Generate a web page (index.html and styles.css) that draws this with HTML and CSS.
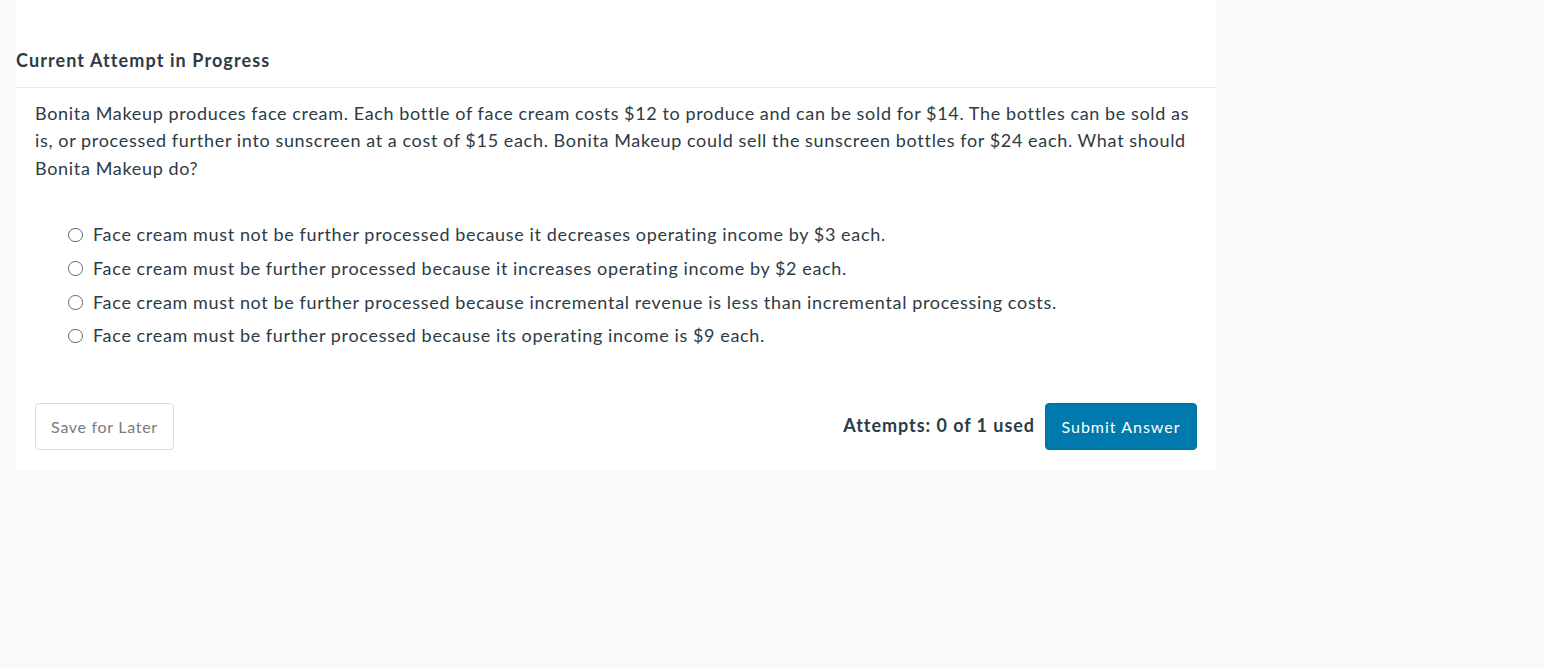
FILE: index.html
```html
<!DOCTYPE html>
<html lang="en">
<head>
<meta charset="utf-8">
<title>Current Attempt in Progress</title>
<link rel="stylesheet" href="styles.css">
</head>
<body>
<main class="panel">
  <header class="panel-head">
    <h2 class="panel-title">Current Attempt in Progress</h2>
  </header>
  <section class="question">
    <p class="question-text">Bonita Makeup produces face cream. Each bottle of face cream costs $12 to produce and can be sold for $14. The bottles can be sold as is, or processed further into sunscreen at a cost of $15 each. Bonita Makeup could sell the sunscreen bottles for $24 each. What should Bonita Makeup do?</p>
    <ul class="options">
      <li class="option"><span class="radio"></span><span class="option-text">Face cream must not be further processed because it decreases operating income by $3 each.</span></li>
      <li class="option"><span class="radio"></span><span class="option-text">Face cream must be further processed because it increases operating income by $2 each.</span></li>
      <li class="option"><span class="radio"></span><span class="option-text">Face cream must not be further processed because incremental revenue is less than incremental processing costs.</span></li>
      <li class="option"><span class="radio"></span><span class="option-text">Face cream must be further processed because its operating income is $9 each.</span></li>
    </ul>
  </section>
  <footer class="actions">
    <button class="btn btn-save" type="button">Save for Later</button>
    <div class="actions-right">
      <span class="attempts">Attempts: 0 of 1 used</span>
      <button class="btn btn-submit" type="button">Submit Answer</button>
    </div>
  </footer>
</main>
</body>
</html>
```

FILE: styles.css
```css
html, body {
  margin: 0;
  padding: 0;
}
body {
  background: #f9f9f9;
  font-family: Lato, "Liberation Sans", sans-serif;
  color: #2d3b45;
  padding-left: 16px;
}
.panel {
  width: 1200px;
  background: #ffffff;
  box-sizing: border-box;
}
.panel-head {
  padding: 48px 0 15px 0;
  border-bottom: 1px solid #ececec;
}
.panel-title {
  margin: 0;
  font-size: 18px;
  line-height: 24px;
  font-weight: 700;
  letter-spacing: 1.1px;
  color: #2d3b45;
}
.question {
  padding: 12px 19px 0 19px;
}
.question-text {
  margin: 0;
  font-size: 18px;
  line-height: 27.3px;
  letter-spacing: 0.7px;
  word-spacing: -0.35px;
}
.options {
  list-style: none;
  margin: 39.5px 0 0 0;
  padding: 0 0 0 33px;
}
.option {
  display: flex;
  align-items: center;
  font-size: 18px;
  line-height: 27px;
  margin-bottom: 6.7px;
  letter-spacing: 0.7px;
  word-spacing: -0.35px;
}
.option:last-child {
  margin-bottom: 0;
}
.radio {
  width: 14.5px;
  height: 14.5px;
  box-sizing: border-box;
  border: 1.6px solid #5f6a72;
  border-radius: 50%;
  margin-right: 10.5px;
  flex: none;
}
.actions {
  display: flex;
  justify-content: space-between;
  align-items: center;
  padding: 54px 19px 20px 19px;
}
.actions-right {
  display: flex;
  align-items: center;
  gap: 10px;
}
.attempts {
  font-size: 18px;
  font-weight: 700;
  letter-spacing: 0.95px;
  color: #2d3b45;
  line-height: 24px;
  margin-top: -3px;
}
.btn {
  font-family: Lato, "Liberation Sans", sans-serif;
  font-size: 16px;
  height: 47px;
  border-radius: 4px;
  box-sizing: border-box;
  cursor: pointer;
}
.btn-save {
  background: #ffffff;
  border: 1px solid #dcdcdc;
  color: #7a7a7a;
  width: 139px;
  padding: 0;
  letter-spacing: 0.7px;
}
.btn-submit {
  background: #0079ac;
  border: 1px solid #006f9e;
  color: #ffffff;
  width: 152px;
  padding: 0;
  letter-spacing: 1px;
}
```
